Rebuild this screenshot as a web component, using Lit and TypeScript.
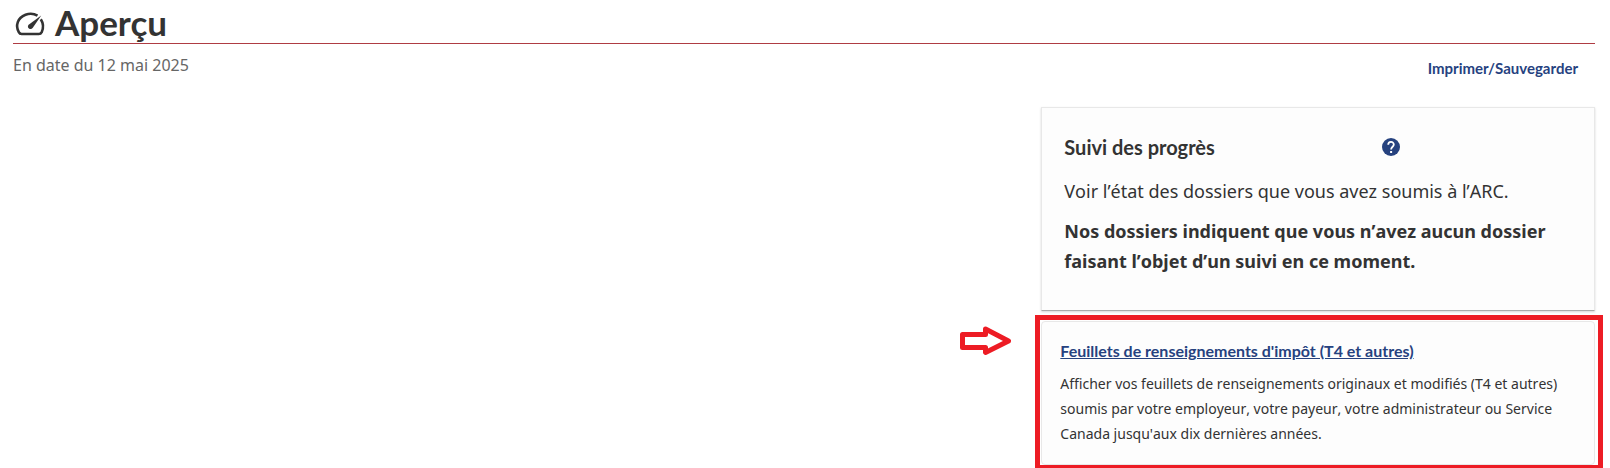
import { LitElement, html, css } from "lit";
import { customElement } from "lit/decorators.js";

@customElement("app-root")
export class AppRoot extends LitElement {
  static styles = css`
    :host {
      display: block;
      height: 100vh;
      overflow: hidden;
      background: #fff;
      color: #333;
      font-family: "Noto Sans", "Open Sans", sans-serif;
      font-size: 18px;
      font-kerning: none;
    }
    *, *::before { box-sizing: border-box; }
    h1, h2, h3, p { margin: 0; }
    a { color: #26427f; }
    .page { padding: 0 15px 0 13px; }
    .title {
      display: flex;
      align-items: center;
      gap: 8px;
      height: 44px;
      padding-top: 1px;
      border-bottom: 1px solid #af3c43;
      font: 700 35px/40px Lato, sans-serif;
    }
    .gauge { width: 34px; height: 34px; }
    .meta {
      display: flex;
      justify-content: space-between;
      height: 63px;
      padding: 9px 17px 0 0;
    }
    .date { color: #666; font-size: 16px; line-height: 24px; }
    .print {
      padding-top: 5px;
      font: 700 15px/20px Lato, sans-serif;
      text-decoration: none;
    }
    .layout { display: grid; grid-template-columns: 1fr 35%; row-gap: 4px; }
    .tracker {
      grid-column: 2;
      min-height: 204px;
      padding: 23px 22px;
      background: #fdfdfd;
      border: 1px solid #e8e8e8;
      border-bottom: 1px solid #aaa;
      box-shadow: 0 1px 2px rgba(0, 0, 0, 0.16);
    }
    .tracker-head { display: grid; grid-template-columns: 318px 1fr; align-items: center; height: 32px; }
    .tracker-head h2 { font: 700 20px/32px Lato, sans-serif; }
    .help {
      display: flex;
      width: 18px;
      height: 18px;
      padding: 0;
      border: 0;
      background: none;
      cursor: pointer;
    }
    .tracker p { padding-top: 13px; line-height: 30px; }
    .tracker .notice { padding-top: 10px; font-weight: 700; }
    .arrow { justify-self: end; margin: 11px 29px 0 0; width: 52px; height: 30px; }
    .highlight { grid-column: 2; margin: 0 -8px 0 -6px; padding: 1px 3px 0 1px; border: 5px solid #ed1c24; }
    .slips {
      padding: 17px 18px 18px;
      background: #fdfdfd;
      border: 1px solid #e8e8e8;
      border-radius: 4px;
    }
    .slips h3 { font: 700 16px/24px Lato, sans-serif; }
    .slips p { padding-top: 8px; font-size: 14px; line-height: 25px; }
  `;

  render() {
    return html`
      <main class="page">
        <h1 class="title">
          <svg class="gauge" viewBox="0 0 34 34" aria-hidden="true" fill="none" stroke="#333" stroke-width="2.6">
            <path d="M24.500 10.700C21.200 8.700 16.500 8.300 12.500 9.800C4.500 12.800 2.200 20.500 5.800 27.200C6.500 28.600 7.300 29 8.600 29H25.800C27.200 29 28 28.500 28.700 27.100C30.700 22.800 30.300 18.200 27.800 14.300" />
            <path d="M28.200 10.600L19.800 22.800C17.600 25.700 13.200 22.600 15.600 19.700Z" fill="#333" stroke="none" />
          </svg>
          <span>Aperçu</span>
        </h1>
        <div class="meta">
          <p class="date">En date du 12 mai 2025</p>
          <a class="print" href="#imprimer">Imprimer/Sauvegarder</a>
        </div>
        <div class="layout">
          <section class="tracker">
            <div class="tracker-head">
              <h2>Suivi des progrès</h2>
              <button class="help" type="button" aria-label="Aide">
                <svg width="18" height="18" viewBox="0 0 18 18" aria-hidden="true">
                  <circle cx="9" cy="9" r="9" fill="#26427f" />
                  <path d="M6.200 6.800C6.200 3 11.800 3 11.800 6.600C11.800 8.700 9.100 8.800 9.100 11.400" fill="none" stroke="#fff" stroke-width="1.800" />
                  <rect x="8.100" y="13" width="2" height="2" fill="#fff" />
                </svg>
              </button>
            </div>
            <p>Voir l’état des dossiers que vous avez soumis à l’ARC.</p>
            <p class="notice">Nos dossiers indiquent que vous n’avez aucun dossier faisant l’objet d’un suivi en ce moment.</p>
          </section>
          <svg class="arrow" viewBox="0 0 52 30" aria-hidden="true">
            <path d="M2.500 8.500H25.500V3L48.500 15L25.500 26.500V21.500H2.500Z" fill="#fff" stroke="#ed1c24" stroke-width="5" stroke-linejoin="round" />
          </svg>
          <div class="highlight">
            <section class="slips">
              <h3><a href="#feuillets">Feuillets de renseignements d'impôt (T4 et autres)</a></h3>
              <p>Afficher vos feuillets de renseignements originaux et modifiés (T4 et autres) soumis par votre employeur, votre payeur, votre administrateur ou Service Canada jusqu'aux dix dernières années.</p>
            </section>
          </div>
        </div>
      </main>
    `;
  }
}
